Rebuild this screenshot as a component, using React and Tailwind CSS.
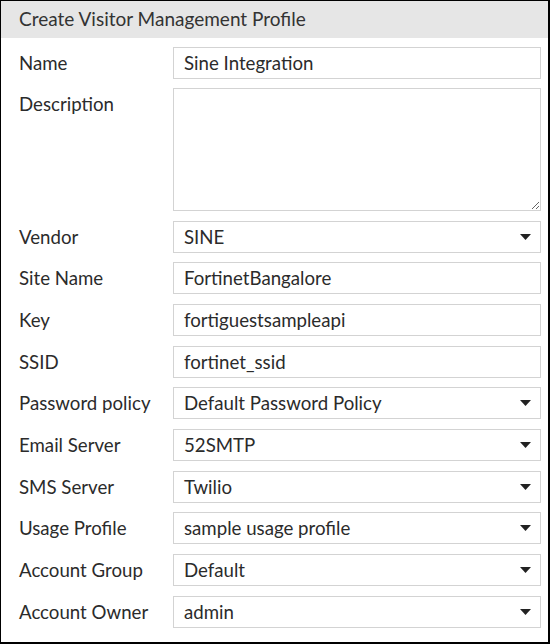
import React from "react";

const rows = [
  { label: "Name", value: "Sine Integration", type: "text" },
  { label: "Description", value: "", type: "textarea" },
  { label: "Vendor", value: "SINE", type: "select" },
  { label: "Site Name", value: "FortinetBangalore", type: "text" },
  { label: "Key", value: "fortiguestsampleapi", type: "text" },
  { label: "SSID", value: "fortinet_ssid", type: "text" },
  { label: "Password policy", value: "Default Password Policy", type: "select" },
  { label: "Email Server", value: "52SMTP", type: "select" },
  { label: "SMS Server", value: "Twilio", type: "select" },
  { label: "Usage Profile", value: "sample usage profile", type: "select" },
  { label: "Account Group", value: "Default", type: "select" },
  { label: "Account Owner", value: "admin", type: "select" },
];

function Arrow() {
  return (
    <svg width="11" height="6" viewBox="0 0 11 6" className="shrink-0">
      <path d="M0 0 H11 L5.5 6 Z" fill="#222" />
    </svg>
  );
}

export default function App() {
  return (
    <div
      className="w-[550px] h-[644px] bg-white border-l border-t border-r-2 border-b-2 border-black text-[#2b2b2b] overflow-hidden"
      style={{ fontFamily: "Lato, 'Open Sans', sans-serif" }}
    >
      <div className="h-[37px] bg-[#e6e6e6] flex items-center pl-[18px] text-[19px] text-[#333]">
        Create Visitor Management Profile
      </div>
      <div className="pt-[8.5px] pl-[18px] pr-[7px]">
        {rows.map((r) => (
          <div key={r.label} className="flex items-start mb-[9.67px]">
            <div className="w-[154px] h-[32px] flex items-center text-[18.67px] shrink-0">{r.label}</div>
            {r.type === "textarea" ? (
              <textarea
                className="flex-1 h-[123px] border border-[#d3d3d3] bg-white outline-none resize-y"
                defaultValue=""
              />
            ) : (
              <div className="flex-1 h-[32px] border border-[#d3d3d3] bg-white flex items-center pl-[10px] pr-[9px] text-[18.67px]">
                <span className="flex-1">{r.value}</span>
                {r.type === "select" && <Arrow />}
              </div>
            )}
          </div>
        ))}
      </div>
    </div>
  );
}
